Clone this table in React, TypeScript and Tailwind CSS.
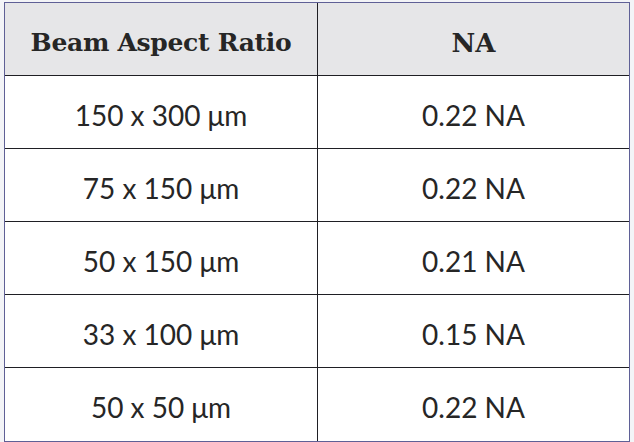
import React from "react"

const rows = [
  ["150 x 300 μm", "0.22 NA"],
  ["75 x 150 μm", "0.22 NA"],
  ["50 x 150 μm", "0.21 NA"],
  ["33 x 100 μm", "0.15 NA"],
  ["50 x 50 μm", "0.22 NA"],
]

const App = () => (
  <div className="w-[634px] h-[442px] bg-[#f3f4f7] pt-[2px] pl-[4px]">
    <div className="w-[626px] border border-[#5f6096] bg-white grid grid-cols-[313px_1fr]">
      <div className="h-[73px] pt-[8px] bg-[#e6e6e8] border-r border-b border-[#1f1f24] flex items-center justify-center font-['DejaVu_Serif',serif] font-bold text-[25px] tracking-[-0.3px] text-[#262626]">
        Beam Aspect Ratio
      </div>
      <div className="h-[73px] pt-[8px] bg-[#e6e6e8] border-b border-[#1f1f24] flex items-center justify-center font-['DejaVu_Serif',serif] font-bold text-[26px] text-[#262626]">
        NA
      </div>
      {rows.map((r, i) => (
        <React.Fragment key={i}>
          <div
            className={`h-[73px] pt-[5px] border-r border-[#1f1f24] ${i < rows.length - 1 ? "border-b" : ""} flex items-center justify-center font-['Lato',sans-serif] text-[28px] text-[#262626]`}
          >
            {r[0]}
          </div>
          <div
            className={`h-[73px] pt-[5px] border-[#1f1f24] ${i < rows.length - 1 ? "border-b" : ""} flex items-center justify-center font-['Lato',sans-serif] text-[28px] text-[#262626]`}
          >
            {r[1]}
          </div>
        </React.Fragment>
      ))}
    </div>
  </div>
)

export default App
